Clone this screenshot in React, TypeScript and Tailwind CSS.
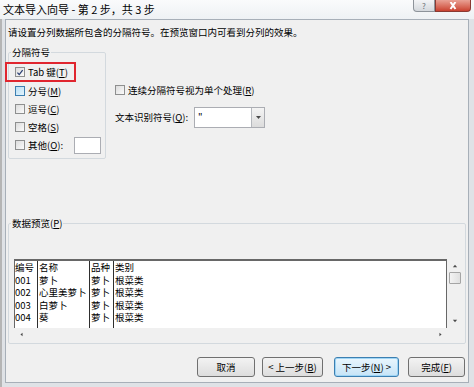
import React from "react";

// Win7-style checkbox: plain, checked, or hovered (blue)
function Box({ checked, hot }: { checked?: boolean; hot?: boolean }) {
  return (
    <span
      className={
        hot
          ? "flex h-[10px] w-[10px] shrink-0 items-center justify-center border border-[#3c7fb1] bg-gradient-to-br from-[#b9dff5] to-[#e3f3fc]"
          : "flex h-[10px] w-[10px] shrink-0 items-center justify-center border border-[#8e8f8f] bg-gradient-to-br from-[#dcdcdc] to-[#fbfbfb]"
      }
    >
      {checked && (
        <svg viewBox="0 0 10 10" className="h-[9px] w-[9px]">
          <path d="M1.8 5.2 L4 7.6 L8.3 2" fill="none" stroke="#2a3f73" strokeWidth="1.6" />
        </svg>
      )}
    </span>
  );
}

function Tri({ dir, className }: { dir: "up" | "down" | "left" | "right"; className?: string }) {
  const d = {
    up: "M1 5 L3.5 2 L6 5 Z",
    down: "M1 2 L3.5 5 L6 2 Z",
    left: "M5 1 L2 3.5 L5 6 Z",
    right: "M2 1 L5 3.5 L2 6 Z",
  }[dir];
  return (
    <svg viewBox="0 0 7 7" className={className ?? "h-[6px] w-[6px]"}>
      <path d={d} fill="#4a4a4a" />
    </svg>
  );
}

function Accel({ text, k, tail = "" }: { text: string; k: string; tail?: string }) {
  return (
    <span className="whitespace-nowrap">
      {text}(<u>{k}</u>){tail}
    </span>
  );
}

const seps = [
  { text: "Tab 键", k: "T", checked: true, h: "h-[20px]" },
  { text: "分号", k: "M", hot: true, h: "h-[18px]" },
  { text: "逗号", k: "C", h: "h-[18px]" },
  { text: "空格", k: "S", h: "h-[18px]" },
];

const preview = [
  ["编号", "名称", "品种", "类别"],
  ["001", "萝卜", "萝卜", "根菜类"],
  ["002", "心里美萝卜", "萝卜", "根菜类"],
  ["003", "白萝卜", "萝卜", "根菜类"],
  ["004", "葵", "萝卜", "根菜类"],
];

const colCls = [
  "w-[23px] border-r border-[#2e2e2e]",
  "w-[52px] border-r border-[#2e2e2e] pl-[1px]",
  "w-[24px] border-r border-[#2e2e2e] pl-[1px]",
  "flex-1 pl-[1px]",
];

const btnBase =
  "flex h-[20px] items-center justify-center rounded-[3px] border text-[9.5px] bg-gradient-to-b";

export default function App() {
  return (
    <div className="relative flex h-[387px] w-[474px] flex-col overflow-hidden bg-[#dfe2e6] font-['Noto_Sans_CJK_SC',sans-serif] text-black shadow-[inset_2px_0_0_#b5b5b5]">
      {/* Title bar */}
      <div className="relative flex h-[19px] shrink-0 items-center bg-gradient-to-b from-[#fafbfc] to-[#eef1f4] pl-[3px] text-[11px] leading-none">
        文本导入向导 - 第 2 步，共 3 步
        <div className="absolute left-[413px] top-0 flex">
          <div className="flex h-[12px] w-[22px] items-center justify-center rounded-bl-[4px] border border-t-0 border-[#8d939a] bg-gradient-to-b from-[#f3f4f6] to-[#d4d8dd] text-[8px] leading-none text-[#6b6f75]">
            ?
          </div>
          <div className="flex h-[12px] w-[36px] items-center justify-center rounded-br-[4px] border border-t-0 border-[#8a3a33] bg-gradient-to-b from-[#e9a195] to-[#c9402f]">
            <svg viewBox="0 0 10 8" className="h-[8px] w-[10px]">
              <path d="M2.5 0 L7.5 7 M7.5 0 L2.5 7" stroke="#fff" strokeWidth="2" />
            </svg>
          </div>
        </div>
      </div>

      {/* Dialog body */}
      <div className="mx-[5px] mb-[4px] flex flex-1 flex-col border border-[#a7afb8] bg-[#f0f0f0] px-[2px] pt-[5px] text-[9.5px]">
        <p className="leading-[14px]">
          请设置分列数据所包含的分隔符号。在预览窗口内可看到分列的效果。
        </p>

        <div className="mt-[7px] flex items-start">
          <fieldset className="w-[98px] rounded-[2px] border border-[#d3d9de]">
            <legend className="ml-[2px] px-[1px] leading-[12px]">分隔符号</legend>
            <div className="flex flex-col pb-[4px] pl-[6px] pr-[4px] pt-[4px]">
              {seps.map((s) => (
                <div key={s.k} className={`flex items-center gap-[3px] ${s.h}`}>
                  <Box checked={s.checked} hot={s.hot} />
                  <Accel text={s.text} k={s.k} />
                </div>
              ))}
              <div className="flex h-[18px] items-center gap-[3px]">
                <Box />
                <Accel text="其他" k="O" tail=":" />
                <span className="ml-auto h-[17px] w-[27px] border border-[#abadb3] bg-white" />
              </div>
            </div>
          </fieldset>

          <div className="ml-[9px] flex flex-col pt-[37px]">
            <div className="flex h-[14px] items-center gap-[3px]">
              <Box />
              <Accel text="连续分隔符号视为单个处理" k="R" />
            </div>
            <div className="mt-[10px] flex items-center">
              <span className="w-[79px]">
                <Accel text="文本识别符号" k="Q" tail=":" />
              </span>
              <div className="flex h-[21px] w-[71px] items-stretch border border-[#abadb3] bg-white">
                <span className="flex-1 pl-[3px] pt-[2px] leading-[12px]">"</span>
                <span className="flex w-[13px] items-center justify-center border-l border-[#b5b8bd] bg-gradient-to-b from-[#f4f4f4] to-[#dcdcdc]">
                  <Tri dir="down" className="h-[7px] w-[7px]" />
                </span>
              </div>
            </div>
          </div>
        </div>

        {/* Data preview */}
        <fieldset className="mt-[58px] w-[458px] rounded-[2px] border border-[#d3d9de]">
          <legend className="ml-[2px] px-[1px] leading-[12px]">
            <Accel text="数据预览" k="P" />
          </legend>
          <div className="pb-[3px] pl-[5px] pt-[30px]">
            <div className="flex">
              <div className="flex w-[433px] flex-col">
                <div className="flex h-[69px] overflow-hidden border-x border-t-2 border-[#676767] bg-white text-[9.5px] leading-[12.5px]">
                  {colCls.map((c, ci) => (
                    <div key={ci} className={`flex flex-col whitespace-nowrap ${c}`}>
                      {preview.map((row, ri) => (
                        <span key={ri}>{row[ci]}</span>
                      ))}
                    </div>
                  ))}
                </div>
                <div className="flex h-[12px] items-center justify-between pl-[5px] pr-[4px]">
                  <Tri dir="left" className="h-[5px] w-[5px]" />
                  <Tri dir="right" className="h-[5px] w-[5px]" />
                </div>
              </div>
              <div className="flex h-[69px] w-[15px] flex-col items-center pl-[1px] pt-[4px]">
                <Tri dir="up" className="h-[6px] w-[6px]" />
                <span className="mt-[3px] h-[12px] w-[12px] rounded-[1px] border border-[#a5a5a5] bg-gradient-to-r from-[#f3f3f3] to-[#e0e0e0]" />
                <span className="flex-1" />
                <Tri dir="down" className="mb-[4px] h-[6px] w-[6px]" />
              </div>
            </div>
          </div>
        </fieldset>

        {/* Buttons */}
        <div className="mt-[13px] flex justify-end pr-[1px]">
          <button className={`${btnBase} w-[58px] border-[#707070] from-[#f3f3f3] to-[#dddddd]`}>取消</button>
          <button className={`${btnBase} ml-[7px] w-[61px] border-[#707070] from-[#f3f3f3] to-[#dddddd]`}>
            &lt; 上一步(<u>B</u>)
          </button>
          <button className={`${btnBase} ml-[11px] w-[65px] border-[#3c7fb1] from-[#eaf6fd] to-[#c6e4f7] shadow-[inset_0_0_0_1px_#9fd5f5]`}>
            下一步(<u>N</u>) &gt;
          </button>
          <button className={`${btnBase} ml-[9px] w-[57px] border-[#707070] from-[#f3f3f3] to-[#dddddd]`}>
            完成(<u>F</u>)
          </button>
        </div>
      </div>

      {/* Red highlight annotation drawn over the Tab option */}
      <div className="pointer-events-none absolute left-[5px] top-[62px] h-[20px] w-[71px] border-2 border-[#e0262f]" />
    </div>
  );
}
